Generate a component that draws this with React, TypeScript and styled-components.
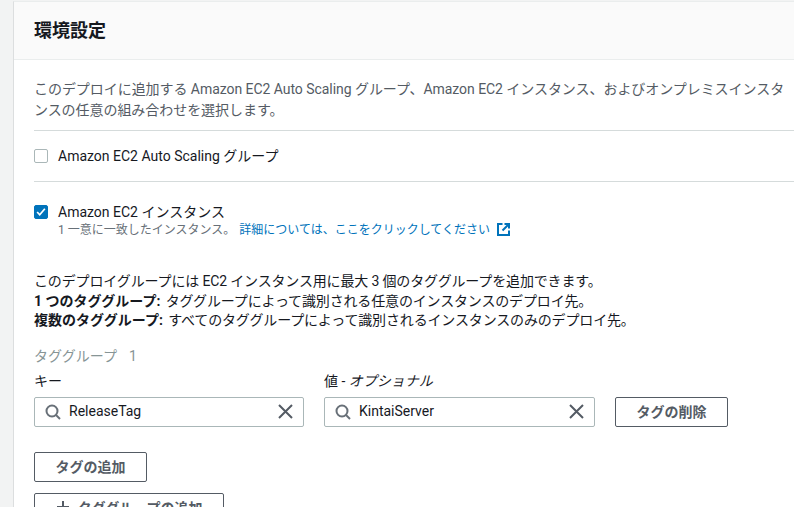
import styled, { createGlobalStyle } from "styled-components";

const fontStack = `Roboto, "Noto Sans CJK JP", sans-serif`;

const GlobalStyle = createGlobalStyle`
  html, body {
    margin: 0;
    height: 100%;
    overflow: hidden;
    background: #f2f3f3;
  }
  body {
    font-family: ${fontStack};
    font-size: 14px;
    line-height: 21px;
    color: #16191f;
  }
`;

function SearchIcon() {
  return (
    <svg width="16" height="16" viewBox="0 0 16 16" fill="none" stroke="#687078" strokeWidth="2">
      <circle cx="7" cy="7" r="5.5" />
      <path d="M11 11l4 4" />
    </svg>
  );
}

function ClearIcon() {
  return (
    <svg width="15" height="15" viewBox="0 0 15 15" fill="none" stroke="#545b64" strokeWidth="2">
      <path d="M1 1l13 13M14 1L1 14" />
    </svg>
  );
}

function ExternalIcon() {
  return (
    <svg width="13" height="13" viewBox="0 0 13 13" fill="none" stroke="#0073bb" strokeWidth="2">
      <path d="M5.5 1H1v11h11V7.5" />
      <path d="M7.5 1H12v4.5M12 1L5.5 7.5" />
    </svg>
  );
}

function TagField({ label, value }: { label: React.ReactNode; value: string }) {
  return (
    <div>
      <FieldLabel>{label}</FieldLabel>
      <SearchBox>
        <SearchIcon />
        <SearchValue>{value}</SearchValue>
        <ClearIcon />
      </SearchBox>
    </div>
  );
}

export default function App() {
  return (
    <>
      <GlobalStyle />
      <Page>
        <Card>
          <Header>環境設定</Header>
          <Body>
            <Description>
              このデプロイに追加する Amazon EC2 Auto Scaling グループ、Amazon EC2 インスタンス、およびオンプレミスインスタンスの任意の組み合わせを選択します。
            </Description>
            <OptionRow>
              <Checkbox />
              <OptionLabel>Amazon EC2 Auto Scaling グループ</OptionLabel>
            </OptionRow>
            <CheckedSection>
              <CheckedRow>
                <Checkbox $checked>
                  <svg width="14" height="14" viewBox="0 0 14 14" fill="none" stroke="#fff" strokeWidth="2">
                    <path d="M2.5 7l3 3.2 6-7" />
                  </svg>
                </Checkbox>
                <div>
                  <OptionLabel>Amazon EC2 インスタンス</OptionLabel>
                  <Hint>
                    1 一意に一致したインスタンス。
                    <HintLink href="#">
                      詳細については、ここをクリックしてください
                      <ExternalIcon />
                    </HintLink>
                  </Hint>
                </div>
              </CheckedRow>
            </CheckedSection>
            <Intro>
              <div>このデプロイグループには EC2 インスタンス用に最大 3 個のタググループを追加できます。</div>
              <div>
                <IntroLead>1 つのタググループ:</IntroLead> タググループによって識別される任意のインスタンスのデプロイ先。
              </div>
              <div>
                <IntroLead>複数のタググループ:</IntroLead> すべてのタググループによって識別されるインスタンスのみのデプロイ先。
              </div>
            </Intro>
            <GroupTitle>
              タググループ<GroupCount>1</GroupCount>
            </GroupTitle>
            <TagRow>
              <TagField label="キー" value="ReleaseTag" />
              <TagField
                label={
                  <>
                    値 - <em>オプショナル</em>
                  </>
                }
                value="KintaiServer"
              />
              <OutlineButton $width={113}>タグの削除</OutlineButton>
            </TagRow>
            <AddTagButton $width={113}>タグの追加</AddTagButton>
            <AddGroupButton $width={190}>
              <svg width="14" height="14" viewBox="0 0 14 14" fill="none" stroke="#545b64" strokeWidth="2">
                <path d="M7 1v12M1 7h12" />
              </svg>
              タググループの追加
            </AddGroupButton>
          </Body>
        </Card>
      </Page>
    </>
  );
}

const Page = styled.div`
  height: 507px;
  width: 794px;
  overflow: hidden;
  padding: 1px 0 0 13px;
  box-sizing: border-box;
`;

const Card = styled.section`
  width: 900px;
  background: #fff;
  border-left: 1px solid #dcdedf;
  border-top: 1px solid #eaeded;
`;

const Header = styled.h2`
  margin: 0;
  height: 57px;
  padding: 0 20px;
  display: flex;
  align-items: center;
  background: #fafafa;
  border-bottom: 1px solid #eaeded;
  font-size: 18px;
  font-weight: 700;
  color: #16191f;
`;

const Body = styled.div`
  width: 760px;
  padding: 19px 0 0 20px;
`;

const Description = styled.p`
  margin: 0;
  padding-bottom: 9px;
  border-bottom: 1px solid #d5dbdb;
  color: #545b64;
  letter-spacing: -0.05px;
`;

const OptionRow = styled.div`
  display: flex;
  align-items: center;
  gap: 10px;
  height: 50px;
  border-bottom: 1px solid #d5dbdb;
`;

const CheckedSection = styled.div`
  padding-top: 20px;
`;

const CheckedRow = styled.div`
  display: flex;
  align-items: flex-start;
  gap: 10px;
`;

const Checkbox = styled.span<{ $checked?: boolean }>`
  flex: none;
  box-sizing: border-box;
  width: 14px;
  height: 14px;
  margin-top: ${(p) => (p.$checked ? "3px" : "0")};
  display: flex;
  align-items: center;
  justify-content: center;
  border-radius: 2px;
  background: ${(p) => (p.$checked ? "#0073bb" : "#fff")};
  border: 1px solid ${(p) => (p.$checked ? "#0073bb" : "#aab7b8")};
`;

const OptionLabel = styled.div`
  color: #16191f;
`;

const Hint = styled.div`
  font-size: 12px;
  line-height: 15px;
  color: #687078;
`;

const HintLink = styled.a`
  margin-left: 4px;
  color: #0073bb;
  text-decoration: none;

  svg {
    margin-left: 7px;
    vertical-align: -2px;
  }
`;

const Intro = styled.div`
  margin-top: 34px;
  font-size: 14px;
  line-height: 19.6px;
  letter-spacing: -0.15px;
  color: #16191f;
`;

const IntroLead = styled.b`
  margin-right: 2px;
  letter-spacing: 0;
`;

const GroupTitle = styled.div`
  margin-top: 15px;
  color: #879596;
  line-height: 20px;
`;

const GroupCount = styled.span`
  margin-left: 12px;
`;

const TagRow = styled.div`
  display: grid;
  grid-template-columns: 270px 271px 113px;
  align-items: end;
  gap: 20px;
  margin-top: 5px;
`;

const FieldLabel = styled.div`
  line-height: 20px;
  margin-bottom: 6px;
  color: #16191f;
`;

const SearchBox = styled.div`
  box-sizing: border-box;
  height: 30px;
  display: flex;
  align-items: center;
  gap: 8px;
  padding: 0 10px;
  border: 1px solid #aab7b8;
  border-radius: 2px;
`;

const SearchValue = styled.span`
  flex: 1;
  color: #16191f;
`;

const OutlineButton = styled.button<{ $width: number }>`
  box-sizing: border-box;
  width: ${(p) => p.$width}px;
  height: 30px;
  display: flex;
  align-items: center;
  justify-content: center;
  gap: 8px;
  padding: 0 0 2px;
  background: #fff;
  border: 1px solid #545b64;
  border-radius: 2px;
  font: 700 14px ${fontStack};
  color: #545b64;
`;

const AddTagButton = styled(OutlineButton)`
  margin-top: 25px;
`;

const AddGroupButton = styled(OutlineButton)`
  margin-top: 11px;
`;
